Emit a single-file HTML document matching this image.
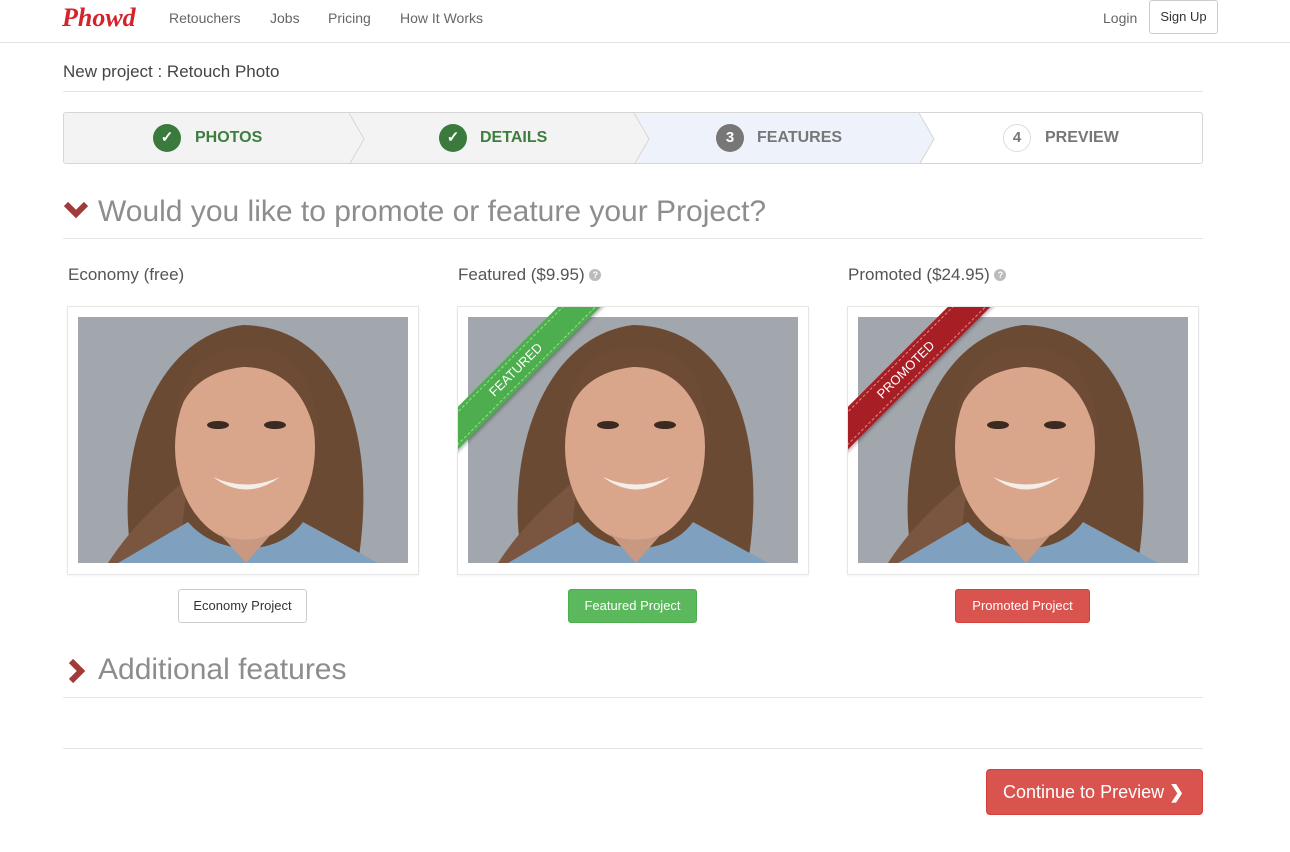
<!DOCTYPE html>
<html><head><meta charset="utf-8"><style>
*{box-sizing:border-box}
body{margin:0;background:#fff;font-family:"Liberation Sans",sans-serif;color:#555;width:1290px;height:852px;overflow:hidden;position:relative}
.a{position:absolute}
.nav{top:0;left:0;width:1290px;height:43px;border-bottom:1px solid #e3e3e3}
.nl{font-size:14px;color:#666;top:10px}
.logo{left:62px;top:3px;font-family:"Liberation Serif",serif;font-style:italic;font-weight:bold;color:#d4232b;font-size:26px}
.btn{border:1px solid #ccc;border-radius:3px;font-size:13px;text-align:center}
.hr{height:1px;background:#e5e5e5}
.steps{left:63px;top:112px;width:1140px;height:52px;border:1px solid #d6d6d6;border-radius:3px;overflow:hidden;background:#fff}
.circ{width:28px;height:28px;border-radius:50%;color:#fff;text-align:center;line-height:28px;font-weight:bold;font-size:15px}
.st{font-weight:bold;font-size:16px;top:16px}
.h2{font-size:30px;color:#8d8d8d}
.lab{font-size:17px;color:#555;top:265px}
.q{display:inline-block;width:12px;height:12px;border-radius:50%;background:#bbb;color:#fff;font-size:9px;text-align:center;line-height:12px;font-weight:bold;vertical-align:2px}
.card{width:352px;height:269px;border:1px solid #e6e6e6;top:306px;overflow:hidden;box-shadow:0 1px 2px rgba(0,0,0,.05)}
.card svg{position:absolute;left:10px;top:10px}
.rib{position:absolute;left:-52px;top:48px;width:220px;height:30px;transform:rotate(-45deg);color:#fff;font-size:13px;text-align:center;line-height:30px;box-shadow:0 2px 3px rgba(0,0,0,.3)}
.rib span{display:block;border-top:1px dashed rgba(255,255,255,.5);border-bottom:1px dashed rgba(255,255,255,.5);margin:3px 0;line-height:22px}
.b2{top:589px;height:34px;font-size:13px;line-height:32px;border-radius:3px}
</style></head><body>
<div class="a nav"></div>
<div class="a logo">Phowd</div>
<div class="a nl" style="left:169px">Retouchers</div>
<div class="a nl" style="left:270px">Jobs</div>
<div class="a nl" style="left:328px">Pricing</div>
<div class="a nl" style="left:400px">How It Works</div>
<div class="a nl" style="left:1103px">Login</div>
<div class="a btn" style="left:1149px;top:0;width:69px;height:34px;line-height:32px;color:#333">Sign Up</div>

<div class="a" style="left:63px;top:62px;font-size:17px;color:#444">New project : Retouch Photo</div>
<div class="a hr" style="left:63px;top:91px;width:1140px"></div>

<div class="a steps">
<svg width="1140" height="52" style="position:absolute;left:0;top:0">
<polygon points="0,0 285,0 300,26 285,52 0,52" fill="#f3f3f3"/>
<polygon points="285,0 570,0 585,26 570,52 285,52 300,26" fill="#f3f3f3"/>
<polygon points="570,0 855,0 870,26 855,52 570,52 585,26" fill="#eef3fb"/>
<polyline points="285,0 300,26 285,52" fill="none" stroke="#d6d6d6"/>
<polyline points="570,0 585,26 570,52" fill="none" stroke="#d6d6d6"/>
<polyline points="855,0 870,26 855,52" fill="none" stroke="#d6d6d6"/>
</svg>
<div class="a circ" style="left:89px;top:11px;background:#3a7a3c">✓</div>
<div class="a st" style="left:131px;color:#3d7d3f">PHOTOS</div>
<div class="a circ" style="left:375px;top:11px;background:#3a7a3c">✓</div>
<div class="a st" style="left:416px;color:#3d7d3f">DETAILS</div>
<div class="a circ" style="left:652px;top:11px;background:#777">3</div>
<div class="a st" style="left:693px;color:#777">FEATURES</div>
<div class="a circ" style="left:939px;top:11px;background:#fff;border:1px solid #ddd;color:#777;line-height:26px">4</div>
<div class="a st" style="left:981px;color:#777">PREVIEW</div>
</div>

<svg class="a" style="left:63px;top:200px" width="28" height="20"><polyline points="3,4 13,14 23,4" fill="none" stroke="#a33a3a" stroke-width="6"/></svg>
<div class="a h2" style="left:98px;top:195px">Would you like to promote or feature your Project?</div>
<div class="a hr" style="left:63px;top:238px;width:1140px"></div>

<div class="a lab" style="left:68px">Economy (free)</div>
<div class="a lab" style="left:458px">Featured ($9.95) <span class="q">?</span></div>
<div class="a lab" style="left:848px">Promoted ($24.95) <span class="q">?</span></div>

<svg width="0" height="0" style="position:absolute"><defs>
<symbol id="ph" viewBox="0 0 330 246">
<rect width="330" height="246" fill="#a2a6ad"/>
<path d="M55,246 C35,150 70,20 165,8 C265,10 300,120 280,246Z" fill="#6b4a33"/>
<path d="M30,246 C60,200 90,180 110,160 L100,246Z" fill="#7a5640"/>
<ellipse cx="167" cy="130" rx="70" ry="95" fill="#d9a68c"/>
<path d="M95,120 C100,40 140,30 170,30 C215,30 240,60 240,130 C230,70 200,50 165,50 C120,55 100,80 95,120Z" fill="#6e4b34"/>
<ellipse cx="140" cy="108" rx="11" ry="4" fill="#3a2a22"/>
<ellipse cx="197" cy="108" rx="11" ry="4" fill="#3a2a22"/>
<path d="M135,160 Q168,185 202,160 Q168,175 135,160Z" fill="#f4eee8"/>
<path d="M110,205 C140,240 200,240 225,205 L300,246 L40,246Z" fill="#7fa0bf"/>
<path d="M140,215 L168,246 L195,215 C185,225 150,225 140,215Z" fill="#c99880"/>
</symbol></defs></svg>

<div class="a card" style="left:67px"><svg width="330" height="246"><use href="#ph"/></svg></div>
<div class="a card" style="left:457px"><svg width="330" height="246"><use href="#ph"/></svg><div class="rib" style="background:#4cae4c"><span>FEATURED</span></div></div>
<div class="a card" style="left:847px"><svg width="330" height="246"><use href="#ph"/></svg><div class="rib" style="background:#a81e25"><span>PROMOTED</span></div></div>

<div class="a btn b2" style="left:178px;width:129px;color:#333">Economy Project</div>
<div class="a b2" style="left:568px;width:129px;background:#5cb85c;border:1px solid #4cae4c;color:#fff;text-align:center">Featured Project</div>
<div class="a b2" style="left:955px;width:135px;background:#d9534f;border:1px solid #d43f3a;color:#fff;text-align:center">Promoted Project</div>

<svg class="a" style="left:66px;top:658px" width="22" height="28"><polyline points="5,3 15,13 5,23" fill="none" stroke="#a33a3a" stroke-width="6"/></svg>
<div class="a h2" style="left:98px;top:653px">Additional features</div>
<div class="a hr" style="left:63px;top:697px;width:1140px"></div>
<div class="a hr" style="left:63px;top:748px;width:1140px"></div>

<div class="a" style="left:986px;top:769px;width:217px;height:46px;background:#d9534f;border:1px solid #d43f3a;border-radius:4px;color:#fff;font-size:18px;line-height:44px;padding-left:16px">Continue to Preview <b>❯</b></div>
</body></html>
